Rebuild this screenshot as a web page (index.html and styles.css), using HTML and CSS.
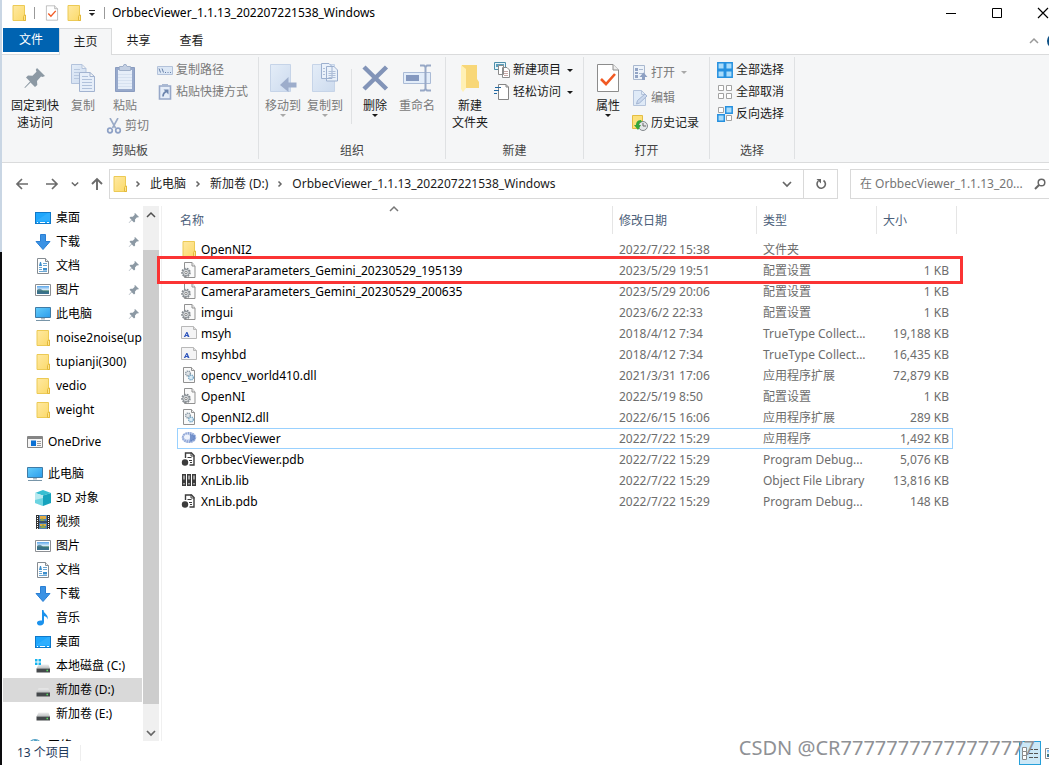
FILE: index.html
```html
<!DOCTYPE html>
<html lang="zh-CN">
<head>
<meta charset="utf-8">
<title>OrbbecViewer_1.1.13_202207221538_Windows</title>
<link rel="stylesheet" href="styles.css">
</head>
<body>
<svg class="sprite" aria-hidden="true">
  <defs>
    <linearGradient id="g-folder" x1="0" y1="0" x2="1" y2="1"><stop offset="0" stop-color="#ffe9a2"/><stop offset="1" stop-color="#fbd968"/></linearGradient>
    <linearGradient id="g-screen" x1="0" y1="0" x2="1" y2="1"><stop offset="0" stop-color="#64cdfb"/><stop offset="1" stop-color="#2b9ceb"/></linearGradient>
    <linearGradient id="g-page" x1="0" y1="0" x2="1" y2="1"><stop offset="0" stop-color="#e4edf8"/><stop offset="1" stop-color="#cddbee"/></linearGradient>
    <linearGradient id="g-sky" x1="0" y1="0" x2="0" y2="1"><stop offset="0" stop-color="#5aa5ea"/><stop offset=".5" stop-color="#e3f1fb"/><stop offset=".6" stop-color="#3d7d6a"/><stop offset="1" stop-color="#3873b5"/></linearGradient>
    <linearGradient id="g-drive" x1="0" y1="0" x2="0" y2="1"><stop offset="0" stop-color="#efefef"/><stop offset="1" stop-color="#b9bcbe"/></linearGradient>
  </defs>
  <symbol id="folder" viewBox="0 0 16 16"><path d="M2 .5h11.500v10h1v5H2z" fill="url(#g-folder)" stroke="#ecca55"/><path d="M12.500 15.500v-4l1-1.500h1v5.500z" fill="#ffe48c" stroke="#e3b93b"/></symbol>
  <symbol id="pin" viewBox="0 0 24 24"><path d="M14 2l8 8-2.500 1-1.500-.5-4 4.500.3 4-2.300 2-4.500-4.500L2 22l-.6-.6 5.600-6L3 11.500l2-2 4.500.2 4-4-.7-2z" fill="#8c99a4"/></symbol>
  <symbol id="chev-r" viewBox="0 0 8 8"><path d="M2.500 1.500L5 4 2.500 6.500" fill="none" stroke="#666" stroke-width="1.500"/></symbol>
  <symbol id="chev-d" viewBox="0 0 10 10"><path d="M1 3l4 4 4-4" fill="none" stroke="#666" stroke-width="1.700"/></symbol>
  <symbol id="chev-u" viewBox="0 0 10 10"><path d="M1 7l4-4 4 4" fill="none" stroke="currentColor" stroke-width="1.500"/></symbol>
  <symbol id="tri" viewBox="0 0 6 3"><path d="M0 0h6L3 3z" fill="currentColor"/></symbol>
  <symbol id="desktop" viewBox="0 0 16 16"><rect x=".5" y="2.500" width="15" height="11" fill="#1ea7fd" stroke="#0f78c9"/><path d="M1 11L13 3h2v8z" fill="#40b5ff" opacity=".5"/><path d="M2 12.500h1M5 12.500h5M12 12.500h2" stroke="#fff"/></symbol>
  <symbol id="download" viewBox="0 0 16 16"><path d="M5.500.5h5v7H15l-7 8-7-8h4.500z" fill="#3b92e4" stroke="#2a7fd4"/></symbol>
  <symbol id="doc" viewBox="0 0 16 16"><path d="M2.500.5h8l3 3v12h-11z" fill="#fff" stroke="#858c92"/><path d="M10.500.5v3h3" fill="#eee" stroke="#858c92"/><path d="M8 5.500h4M8 7.500h4M4 9.500h3M4 11.500h3M4 13.500h8" stroke="#6ba6d3"/><path d="M4 8l1-4h1l1 4M8 10h4v2.500H8z" fill="#3e8fcc"/></symbol>
  <symbol id="pic" viewBox="0 0 16 16"><path d="M.5 2.500h15v11H.5z" fill="#fff" stroke="#8c8f93"/><path d="M2 4h12v8H2z" fill="url(#g-sky)"/><path d="M2 8q3-3 6 1l6 1v2H2z" fill="#3a6f86" opacity=".7"/></symbol>
  <symbol id="pc" viewBox="0 0 16 16"><path d="M.5 1.500h15v10H.5z" fill="url(#g-screen)" stroke="#3f7ba6"/><path d="M6 12h4v1.500H6z" fill="#aebbc4"/><path d="M1 14.500h14" stroke="#7895a8"/></symbol>
  <symbol id="onedrive" viewBox="0 0 16 16"><path d="M.5 2.500h15v11H.5z" fill="#f5f5f5" stroke="#858585"/><path d="M1 4h14" stroke="#858585" stroke-width="2"/><path d="M4 6.500h5V12H4z" fill="#0a70d4"/><path d="M10 7.500h4M10 9.500h4M10 11.500h4" stroke="#999"/></symbol>
  <symbol id="cube" viewBox="0 0 16 16"><path d="M8 0l8 3-8 2.500L0 3z" fill="#36bfd2"/><path d="M0 3l8 2.500V16l-8-3z" fill="#b8e9ef"/><path d="M16 3L8 5.500V16l8-3z" fill="#16a3bd"/><path d="M0 10l8-2v8l-8-3z" fill="#4bcbdc" opacity=".7"/></symbol>
  <symbol id="film" viewBox="0 0 16 16"><path d="M1 1h14v14H1z" fill="#333"/><path d="M4 1h8v14H4z" fill="#4c81b5"/><path d="M5 2h6v3H5zM5 10h6v2H5z" fill="#e2ac43"/><path d="M4 8h8" stroke="#222"/><path d="M7 4l3 3H5zM8 10l3 4H5z" fill="#8ba34c"/><path d="M2.500 2v13M13.500 2v13" stroke="#fff" stroke-dasharray="1 1"/></symbol>
  <symbol id="music" viewBox="0 0 16 16"><path d="M7 0h1.500c0 4 5.500 4 4 9.500-.5-2.500-1.500-3-3.500-3.500V12c0 2-1.500 3.500-4 3.500S2 14 2 12.800 3.500 10 7 10.500z" fill="#1b92ed"/></symbol>
  <symbol id="drive" viewBox="0 0 16 16"><path d="M3.500 6.500h10l1.500 4H1.500z" fill="url(#g-drive)"/><path d="M1.500 10.500H15v4H1.500z" fill="#44484b"/><path d="M11.500 12.500H13" stroke="#55e35e" stroke-width="1.500"/></symbol>
  <symbol id="drive-c" viewBox="0 0 16 16"><use href="#drive"/><path d="M0 1h2.500v2.500H0zM3.500 1H6v2.500H3.500zM0 4.500h2.500V7H0zM3.500 4.500H6V7H3.500z" fill="#16b4ee"/></symbol>
  <symbol id="network" viewBox="0 0 16 16"><circle cx="8" cy="8" r="7" fill="#4f9fc4"/><path d="M3 4l4-2 1 4-3 2zM10 2l3 3-2 2z" fill="#d8edf2"/></symbol>
  <symbol id="cfg" viewBox="0 0 16 16"><path d="M3.500.5h7.500L14 4v11.500H3.500z" fill="#fafafa" stroke="#919191"/><path d="M11 .5V4h3" fill="#eee" stroke="#919191"/><circle cx="5" cy="10.500" r="3.800" fill="#d6dadd" stroke="#858b90" stroke-width="2" stroke-dasharray="1.600 1"/><circle cx="5" cy="10.500" r="3.200" fill="#d9dde0" stroke="#8f959a"/><circle cx="5" cy="10.500" r="1.200" fill="#fff" stroke="#888"/></symbol>
  <symbol id="font" viewBox="0 0 16 16"><path d="M.5 1.500h12l3 3v9H.5z" fill="#f4f4f5" stroke="#b8b8b8"/><path d="M12.500 1.500v3h3" fill="#ddd" stroke="#b8b8b8"/><path d="M2.800 12L5.400 7h1L8.500 12H6.700L6.400 11H4.800L4.300 12zM5 10h1.300L5.800 8.500z" fill="#2e55bd"/></symbol>
  <symbol id="dll" viewBox="0 0 16 16"><path d="M2.500.5h8l3 3v12h-11z" fill="#fafafa" stroke="#919191"/><path d="M10.500.5v3h3" fill="#eee" stroke="#919191"/><circle cx="7" cy="6.500" r="2.400" fill="#dfe4e8" stroke="#8b99a4" stroke-width="1.400" stroke-dasharray="1.200 .6"/><circle cx="10" cy="10.500" r="2.400" fill="#d9ebf6" stroke="#77a6c4" stroke-width="1.400" stroke-dasharray="1.200 .6"/></symbol>
  <symbol id="orb" viewBox="0 0 16 16"><ellipse cx="8" cy="7.500" rx="7.300" ry="5.500" fill="#c3d0ec"/><ellipse cx="8" cy="7.500" rx="5.800" ry="4.200" fill="none" stroke="#8fa6d6" stroke-width="2.600" stroke-dasharray="1.200 1"/><ellipse cx="6" cy="7" rx="3" ry="2.500" fill="#eef3fc"/><path d="M9 4l5 1.500v4L9 12z" fill="#4f73bb" opacity=".65"/></symbol>
  <symbol id="pdb" viewBox="0 0 16 16"><path d="M4.500 7V2h6L13 4.500V14H8.500" fill="none" stroke="#3c3c3c" stroke-width="1.400"/><path d="M10 1.500V5h3.500M6.500 6.500h4M8 9.500h3M9 11.500h2" fill="none" stroke="#3c3c3c"/><circle cx="4" cy="11.500" r="3.200" fill="#3c3c3c"/></symbol>
  <symbol id="lib" viewBox="0 0 16 16"><path d="M1 2h4v12H1zM6 2h4v12H6zM11 2h4v12h-4z" fill="#3c3c3c"/><path d="M2.500 3.500h1v4h-1zM7.500 3.500h1v4h-1zM12.500 3.500h1v4h-1zM2.500 11h1v1.500h-1zM7.500 11h1v1.500h-1zM12.500 11h1v1.500h-1z" fill="#fff"/></symbol>
  <symbol id="prop" viewBox="0 0 24 30"><path d="M1.500 1.500H17L22.500 7v21.500h-21z" fill="#fff" stroke="#8c8c8c"/><path d="M17 1.500V7h5.500" fill="#eee" stroke="#8c8c8c"/><path d="M5 16l5 5 9-10" fill="none" stroke="#f15a24" stroke-width="2.600"/></symbol>
  <symbol id="copy" viewBox="0 0 26 30"><path d="M1.500 1.500H12l4 4v15H1.500zM12 1.500v4h4" fill="url(#g-page)" stroke="#b3c3dc"/><path d="M4 6.500h6M4 9.500h5M4 12.500h5M4 15.500h5" stroke="#b9c9e0"/><path d="M9.500 9.500H20l4.500 4v15h-15zM20 9.500v4h4.500" fill="#e6eef9" stroke="#a2b3d0"/><path d="M12 13.500h6M12 16.500h10M12 19.500h10M12 22.500h10M12 25.500h10" stroke="#b0c1db"/></symbol>
  <symbol id="paste" viewBox="0 0 22 30"><path d="M1.500 4.500h19v24h-19z" fill="#97a9cb" stroke="#8a9cc0"/><path d="M4 7h14v19H4z" fill="#e6eef9"/><path d="M4 11.500h14M4 14.500h14M4 17.500h14M4 20.500h14M4 23.500h14" stroke="#d6e1f0"/><path d="M5.500 7.500v-4H9l1-2h2l1 2h3.500v4z" fill="#c3cfe2" stroke="#a0b0ca"/></symbol>
  <symbol id="cut" viewBox="0 0 16 16"><path d="M4 0l5.500 10M12 0L6.500 10" stroke="#9aaac6" stroke-width="1.600"/><circle cx="4" cy="12.500" r="2.300" fill="none" stroke="#8ea1c6" stroke-width="1.700"/><circle cx="12" cy="12.500" r="2.300" fill="none" stroke="#8ea1c6" stroke-width="1.700"/></symbol>
  <symbol id="path" viewBox="0 0 16 16"><path d="M.5 4.500h15v8H.5z" fill="#dce7f5" stroke="#b3c2da"/><path d="M2 6.500l1.500 4M5 6.500l1.500 4M8 10.500h1M10.500 10.500h1M13 10.500h1" stroke="#667fa8"/></symbol>
  <symbol id="shortcut" viewBox="0 0 16 16"><path d="M2.500 2h11v13h-11z" fill="#e5edf8" stroke="#97a8c9" stroke-width="1.600"/><path d="M5 0h6v3H5z" fill="#a9b8d2"/><path d="M6 12.500c0-3 1-4 3-5" fill="none" stroke="#6d85ad" stroke-width="1.600"/><path d="M6.500 5.500h5v5z" fill="#6d85ad"/></symbol>
  <symbol id="moveto" viewBox="0 0 28 30"><path d="M1.500 1.500h20v27h-20z" fill="url(#g-page)" stroke="#c6d4e8"/><path d="M27.500 19.500h-8V14L11 22l8.500 7v-4.500h8z" fill="#9dadcb"/></symbol>
  <symbol id="copyto" viewBox="0 0 28 30"><path d="M1.500 1.500h22v27h-22z" fill="url(#g-page)" stroke="#c6d4e8"/><path d="M10.500.5H18l3 3v12H10.500zM15.500 3.500H23l3.500 3.500v11h-11z" fill="#eaf1fa" stroke="#9db0cf"/><path d="M17.500 8.500h7M17.500 10.500h7M17.500 12.500h7M17.500 14.500h7M12 5.500h2M12 8.500h2M12 11.500h2" stroke="#b0c0d9"/></symbol>
  <symbol id="del" viewBox="0 0 28 30"><path d="M3 4L25.500 26M25.500 4L3 26" stroke="#8294b8" stroke-width="4.500"/></symbol>
  <symbol id="rename" viewBox="0 0 28 30"><path d="M.5 9.500h27v11H.5z" fill="#e3edf9" stroke="#aabbd6"/><path d="M3 12h13v6H3z" fill="#8498bf"/><path d="M17 2.500h4l1.500 1.500L24 2.500h4M17 27.500h4l1.500-1.500L24 27.500h4M22.500 3v24" fill="none" stroke="#97a8c6" stroke-width="2"/></symbol>
  <symbol id="bigfolder" viewBox="0 0 24 30"><path d="M4 2h15v14l2 3v6H4z" fill="#f8d778"/><path d="M3 2l5 4v19l-3 4-2-3z" fill="#fff0b5"/></symbol>
  <symbol id="newitem" viewBox="0 0 16 16"><path d="M.5.5h11v7H.5z" fill="#e8f4fa" stroke="#4e8faa"/><path d="M2 2h8v3H2z" fill="#5b9fbc"/><path d="M4.500 3.500h5v9h-5zM8.500 5.500H13L15.500 8v7.500h-7z" fill="#fff" stroke="#8b8b8b"/><path d="M10 9.500h4M10 11.500h4M10 13.500h4" stroke="#c7a7a5"/></symbol>
  <symbol id="access" viewBox="0 0 16 16"><path d="M4.500.5H12L14.500 3v12.500h-10z" fill="#fff" stroke="#858585"/><path d="M12 .5V3h2.500" fill="none" stroke="#858585"/><path d="M1 3.500h6M0 6.500h5M0 9.500h3" stroke="#2269a2" stroke-width="1.200"/></symbol>
  <symbol id="open" viewBox="0 0 16 16"><path d="M1.500.5h11v14h-11z" fill="#edf3fa" stroke="#a9b8cf"/><path d="M3 3h3v3H3zM3 7h3v2H3zM3 10h3v3H3z" fill="#92a4c5"/><path d="M7 4.500h4M7 8.500h4" stroke="#a9b8cf"/><path d="M10 15v-3H7.500l4-4.500 4 4.500H13v3z" fill="#8da0c3"/></symbol>
  <symbol id="edit" viewBox="0 0 16 16"><path d="M1.500.5h8l4 4v11h-12z" fill="#dfeaf7" stroke="#b5c4db"/><path d="M9.500.5v4h4" fill="none" stroke="#b5c4db"/><path d="M5.500 10.500L13 4l2 2-7.500 7-3 1z" fill="#cbd9ee" stroke="#a2b4d2"/></symbol>
  <symbol id="history" viewBox="0 0 16 16"><path d="M.5.5h10v13H.5z" fill="#fce17b" stroke="#e4bd43"/><circle cx="11" cy="11" r="4.500" fill="#e3e6e8" stroke="#81878b"/><path d="M11 8v3h3" fill="none" stroke="#666"/><path d="M9 5c-4 0-5 3-5 5H2l4 5 3-5H7c0-2 1-3 3-3z" fill="#35a53b"/></symbol>
  <symbol id="selall" viewBox="0 0 16 16"><path d="M.8.8h6.500v6.500H.8zM8.700.8h6.500v6.500H8.700zM.8 8.700h6.500v6.500H.8zM8.700 8.700h6.500v6.500H8.700z" fill="#a9dcfb" stroke="#2590df" stroke-width="1.500"/></symbol>
  <symbol id="selnone" viewBox="0 0 16 16"><path d="M1.500 1.500h5v5h-5zM9.500 1.500h5v5h-5zM1.500 9.500h5v5h-5zM9.500 9.500h5v5h-5z" fill="#fff" stroke="#a2a2a2"/></symbol>
  <symbol id="selinv" viewBox="0 0 16 16"><path d="M1.500 1.500h5v5h-5zM9.500 9.500h5v5h-5z" fill="#fff" stroke="#a2a2a2"/><path d="M8.700.8h6.500v6.500H8.700zM.8 8.700h6.500v6.500H.8z" fill="#a9dcfb" stroke="#2590df" stroke-width="1.500"/></symbol>
</svg>

<div class="window">
  <header class="titlebar">
    <svg class="i16"><use href="#folder"/></svg>
    <span class="bar"></span>
    <button class="qa" aria-label="属性"><svg class="i16"><use href="#prop"/></svg></button>
    <button class="qa" aria-label="新建文件夹"><svg class="i16"><use href="#folder"/></svg></button>
    <button class="qa" aria-label="自定义快速访问工具栏"><svg class="qmenu" viewBox="0 0 8 8"><path d="M1 1.500h6" stroke="#222"/><path d="M1 4h6L4 7z" fill="#222"/></svg></button>
    <span class="bar"></span>
    <h1 class="title">OrbbecViewer_1.1.13_202207221538_Windows</h1>
    <div class="controls">
      <button aria-label="最小化"><svg class="ctl" viewBox="0 0 12 12"><path d="M1 6.500h10" stroke="#000"/></svg></button>
      <button aria-label="最大化"><svg class="ctl" viewBox="0 0 12 12"><path d="M1.500 1.500h9v9h-9z" fill="none" stroke="#000"/></svg></button>
      <button aria-label="关闭"><svg class="ctl" viewBox="0 0 12 12"><path d="M1 1l10 10M11 1L1 11" stroke="#000" stroke-width="1.200"/></svg></button>
    </div>
  </header>

  <nav class="tabs">
    <button class="tab file">文件</button>
    <button class="tab active">主页</button>
    <button class="tab">共享</button>
    <button class="tab">查看</button>
    <div class="tabs-end">
      <button class="collapse" aria-label="折叠功能区"><svg class="i10"><use href="#chev-u"/></svg></button>
      <button class="help" aria-label="帮助"></button>
    </div>
  </nav>

  <section class="ribbon">
    <div class="group g-clip">
      <div class="tools">
        <button class="big wide"><svg class="pic pinbig"><use href="#pin"/></svg><span>固定到快<br>速访问</span></button>
        <button class="big off"><svg class="pic"><use href="#copy"/></svg><span>复制</span></button>
        <div class="stack paste">
          <button class="big off"><svg class="pic"><use href="#paste"/></svg><span>粘贴</span></button>
          <button class="small off cutrow"><svg class="i16"><use href="#cut"/></svg>剪切</button>
        </div>
        <div class="stack">
          <button class="small off"><svg class="i16"><use href="#path"/></svg>复制路径</button>
          <button class="small off"><svg class="i16"><use href="#shortcut"/></svg>粘贴快捷方式</button>
        </div>
      </div>
      <div class="caption">剪贴板</div>
    </div>
    <div class="group g-org">
      <div class="tools">
        <button class="big off"><svg class="pic"><use href="#moveto"/></svg><span>移动到</span><svg class="tri"><use href="#tri"/></svg></button>
        <button class="big off"><svg class="pic"><use href="#copyto"/></svg><span>复制到</span><svg class="tri"><use href="#tri"/></svg></button>
        <span class="rule"></span>
        <button class="big"><svg class="pic"><use href="#del"/></svg><span>删除</span><svg class="tri"><use href="#tri"/></svg></button>
        <button class="big off"><svg class="pic"><use href="#rename"/></svg><span>重命名</span></button>
      </div>
      <div class="caption">组织</div>
    </div>
    <div class="group g-new">
      <div class="tools">
        <button class="big"><svg class="pic"><use href="#bigfolder"/></svg><span>新建<br>文件夹</span></button>
        <div class="stack">
          <button class="small"><svg class="i16"><use href="#newitem"/></svg>新建项目<svg class="tri"><use href="#tri"/></svg></button>
          <button class="small"><svg class="i16"><use href="#access"/></svg>轻松访问<svg class="tri"><use href="#tri"/></svg></button>
        </div>
      </div>
      <div class="caption">新建</div>
    </div>
    <div class="group g-open">
      <div class="tools">
        <button class="big"><svg class="pic"><use href="#prop"/></svg><span>属性</span><svg class="tri"><use href="#tri"/></svg></button>
        <div class="stack roomy">
          <button class="small off"><svg class="i16"><use href="#open"/></svg>打开<svg class="tri"><use href="#tri"/></svg></button>
          <button class="small off"><svg class="i16"><use href="#edit"/></svg>编辑</button>
          <button class="small"><svg class="i16"><use href="#history"/></svg>历史记录</button>
        </div>
      </div>
      <div class="caption">打开</div>
    </div>
    <div class="group g-sel">
      <div class="tools">
        <div class="stack">
          <button class="small"><svg class="i16"><use href="#selall"/></svg>全部选择</button>
          <button class="small"><svg class="i16"><use href="#selnone"/></svg>全部取消</button>
          <button class="small"><svg class="i16"><use href="#selinv"/></svg>反向选择</button>
        </div>
      </div>
      <div class="caption">选择</div>
    </div>
  </section>

  <div class="address-row">
    <div class="history-nav">
      <button aria-label="后退"><svg class="arrow" viewBox="0 0 14 14"><path d="M13 7H2M7 2L2 7l5 5" fill="none" stroke="#6b6b6b" stroke-width="1.700"/></svg></button>
      <button aria-label="前进"><svg class="arrow" viewBox="0 0 14 14"><path d="M1 7h11M7 2l5 5-5 5" fill="none" stroke="#6b6b6b" stroke-width="1.700"/></svg></button>
      <button class="recent" aria-label="最近位置"><svg class="i8"><use href="#chev-d"/></svg></button>
      <button class="up" aria-label="上移"><svg class="arrow" viewBox="0 0 14 14"><path d="M7 13V2M2 7l5-5 5 5" fill="none" stroke="#6b6b6b" stroke-width="1.900"/></svg></button>
    </div>
    <div class="address">
      <svg class="i16"><use href="#folder"/></svg>
      <svg class="i8"><use href="#chev-r"/></svg>
      <a href="#">此电脑</a>
      <svg class="i8"><use href="#chev-r"/></svg>
      <a href="#">新加卷 (D:)</a>
      <svg class="i8"><use href="#chev-r"/></svg>
      <a href="#">OrbbecViewer_1.1.13_202207221538_Windows</a>
      <button class="drop" aria-label="以前的位置"><svg class="i10"><use href="#chev-d"/></svg></button>
      <button class="refresh" aria-label="刷新"><svg class="i12" viewBox="0 0 12 12"><path d="M8.500 2.500A4.200 4.200 0 1 1 3.300 3" fill="none" stroke="#666" stroke-width="1.600"/><path d="M1.500 1h4.500v4.500z" fill="#666"/></svg></button>
    </div>
    <div class="search">
      <input type="text" aria-label="搜索" placeholder="在 OrbbecViewer_1.1.13_20...">
      <svg class="i12" viewBox="0 0 12 12"><circle cx="7.500" cy="4.500" r="3.300" fill="none" stroke="#666" stroke-width="1.500"/><path d="M5 7L1 11" stroke="#666" stroke-width="2"/></svg>
    </div>
  </div>

  <main class="content">
    <aside class="side">
      <div class="tree">
        <ul>
          <li><svg class="i16"><use href="#desktop"/></svg><span>桌面</span><svg class="pin"><use href="#pin"/></svg></li>
          <li><svg class="i16"><use href="#download"/></svg><span>下载</span><svg class="pin"><use href="#pin"/></svg></li>
          <li><svg class="i16"><use href="#doc"/></svg><span>文档</span><svg class="pin"><use href="#pin"/></svg></li>
          <li><svg class="i16"><use href="#pic"/></svg><span>图片</span><svg class="pin"><use href="#pin"/></svg></li>
          <li><svg class="i16"><use href="#pc"/></svg><span>此电脑</span><svg class="pin"><use href="#pin"/></svg></li>
          <li><svg class="i16"><use href="#folder"/></svg><span>noise2noise(up</span></li>
          <li><svg class="i16"><use href="#folder"/></svg><span>tupianji(300)</span></li>
          <li><svg class="i16"><use href="#folder"/></svg><span>vedio</span></li>
          <li><svg class="i16"><use href="#folder"/></svg><span>weight</span></li>
          <li class="root"><svg class="i16"><use href="#onedrive"/></svg><span>OneDrive</span></li>
          <li class="root"><svg class="i16"><use href="#pc"/></svg><span>此电脑</span></li>
          <li><svg class="i16"><use href="#cube"/></svg><span>3D 对象</span></li>
          <li><svg class="i16"><use href="#film"/></svg><span>视频</span></li>
          <li><svg class="i16"><use href="#pic"/></svg><span>图片</span></li>
          <li><svg class="i16"><use href="#doc"/></svg><span>文档</span></li>
          <li><svg class="i16"><use href="#download"/></svg><span>下载</span></li>
          <li><svg class="i16"><use href="#music"/></svg><span>音乐</span></li>
          <li><svg class="i16"><use href="#desktop"/></svg><span>桌面</span></li>
          <li><svg class="i16"><use href="#drive-c"/></svg><span>本地磁盘 (C:)</span></li>
          <li class="current"><svg class="i16"><use href="#drive"/></svg><span>新加卷 (D:)</span></li>
          <li><svg class="i16"><use href="#drive"/></svg><span>新加卷 (E:)</span></li>
          <li class="root"><svg class="i16"><use href="#network"/></svg><span>网络</span></li>
        </ul>
      </div>
      <div class="scrollbar">
        <button aria-label="向上滚动"><svg class="i10"><use href="#chev-u"/></svg></button>
        <div class="thumb"></div>
        <button aria-label="向下滚动"><svg class="i10"><use href="#chev-d"/></svg></button>
      </div>
    </aside>

    <section class="files">
      <table>
        <colgroup><col class="c-name"><col class="c-date"><col class="c-type"><col class="c-size"></colgroup>
        <thead><tr><th>名称<svg class="sort"><use href="#chev-u"/></svg></th><th>修改日期</th><th>类型</th><th>大小</th></tr></thead>
        <tbody>
          <tr><td><svg class="i16"><use href="#folder"/></svg>OpenNI2</td><td>2022/7/22 15:38</td><td>文件夹</td><td></td></tr>
          <tr class="marked"><td><svg class="i16"><use href="#cfg"/></svg>CameraParameters_Gemini_20230529_195139</td><td>2023/5/29 19:51</td><td>配置设置</td><td>1 KB</td></tr>
          <tr><td><svg class="i16"><use href="#cfg"/></svg>CameraParameters_Gemini_20230529_200635</td><td>2023/5/29 20:06</td><td>配置设置</td><td>1 KB</td></tr>
          <tr><td><svg class="i16"><use href="#cfg"/></svg>imgui</td><td>2023/6/2 22:33</td><td>配置设置</td><td>1 KB</td></tr>
          <tr><td><svg class="i16"><use href="#font"/></svg>msyh</td><td>2018/4/12 7:34</td><td>TrueType Collect...</td><td>19,188 KB</td></tr>
          <tr><td><svg class="i16"><use href="#font"/></svg>msyhbd</td><td>2018/4/12 7:34</td><td>TrueType Collect...</td><td>16,435 KB</td></tr>
          <tr><td><svg class="i16"><use href="#dll"/></svg>opencv_world410.dll</td><td>2021/3/31 17:06</td><td>应用程序扩展</td><td>72,879 KB</td></tr>
          <tr><td><svg class="i16"><use href="#cfg"/></svg>OpenNI</td><td>2022/5/19 8:50</td><td>配置设置</td><td>1 KB</td></tr>
          <tr><td><svg class="i16"><use href="#dll"/></svg>OpenNI2.dll</td><td>2022/6/15 16:06</td><td>应用程序扩展</td><td>289 KB</td></tr>
          <tr class="focused"><td><svg class="i16"><use href="#orb"/></svg>OrbbecViewer</td><td>2022/7/22 15:29</td><td>应用程序</td><td>1,492 KB</td></tr>
          <tr><td><svg class="i16"><use href="#pdb"/></svg>OrbbecViewer.pdb</td><td>2022/7/22 15:29</td><td>Program Debug...</td><td>5,076 KB</td></tr>
          <tr><td><svg class="i16"><use href="#lib"/></svg>XnLib.lib</td><td>2022/7/22 15:29</td><td>Object File Library</td><td>13,816 KB</td></tr>
          <tr><td><svg class="i16"><use href="#pdb"/></svg>XnLib.pdb</td><td>2022/7/22 15:29</td><td>Program Debug...</td><td>148 KB</td></tr>
        </tbody>
      </table>
    </section>
  </main>

  <footer class="status">
    <span class="count">13 个项目</span>
    <div class="views">
      <button class="view on" aria-label="详细信息"><svg viewBox="0 0 18 16"><path d="M1.500 2.500h4v4h-4zM1.500 6.500h4v4h-4zM1.500 10.500h4v4h-4z" fill="#fff" stroke="#8a8a8a"/><path d="M8 4.500h4M13 4.500h4M8 8.500h4M13 8.500h4M8 12.500h4M13 12.500h4" stroke="#555"/></svg></button>
      <button class="view" aria-label="大图标"><svg viewBox="0 0 18 16"><path d="M1.500 3.500h14v10h-14z" fill="#fff" stroke="#8a8a8a"/><path d="M3 5h11v7H3z" fill="url(#g-sky)"/></svg></button>
    </div>
  </footer>
  <div class="watermark">CSDN @CR77777777777777777</div>
</div>
</body>
</html>
```
FILE: styles.css
```css
* { box-sizing: border-box; }

body {
  margin: 0;
  height: 100vh;
  overflow: hidden;
  padding-left: 2px;
  background: linear-gradient(#c9d6e4 0 252px, #0c0c0e 252px);
  color: #1a1a1a;
  font: 12px/16px "Noto Sans", "Noto Sans CJK SC", sans-serif;
}

button {
  margin: 0;
  padding: 0;
  border: 0;
  background: none;
  color: inherit;
  font: inherit;
}

a { color: inherit; text-decoration: none; }
svg { display: block; flex: none; }
.sprite { position: absolute; width: 0; height: 0; }
.i8 { width: 8px; height: 8px; }
.i10 { width: 10px; height: 10px; }
.i12 { width: 12px; height: 12px; }
.i16 { width: 16px; height: 16px; }

.window {
  position: relative;
  display: flex;
  flex-direction: column;
  height: 100%;
  overflow: hidden;
  background: #fff;
}

/* Title bar */
.titlebar {
  display: flex;
  align-items: center;
  height: 28px;
  padding: 0 0 2px 9px;
  color: #000;
}
.bar { width: 1px; height: 12px; margin: 0 7px; background: #999; }
.titlebar .i16 + .bar { margin-right: 9px; }
.qa { margin-right: 6px; }
.qa + .bar { margin-left: 2px; }
.qmenu { width: 8px; height: 8px; }
.title { margin: 0; font-size: 12px; font-weight: 400; }
.controls { display: flex; margin-left: auto; margin-right: -17px; }
.controls button { display: grid; place-items: center; width: 46px; height: 24px; }
.ctl { width: 12px; height: 12px; }

/* Ribbon tabs */
.tabs {
  display: flex;
  height: 27px;
  padding-left: 1px;
  border-bottom: 1px solid #dadbdc;
}
.tab { width: 53px; height: 26px; }
.tab.file { width: 56px; height: 24px; background: #0063b1; color: #fff; }
.tab.active {
  width: 53px;
  height: 27px;
  border: 1px solid #dadbdc;
  border-bottom: 0;
  background: #f5f6f7;
}
.tabs-end { display: flex; align-items: center; gap: 8px; margin-left: auto; margin-right: -14px; color: #999; }
.help { width: 16px; height: 16px; border-radius: 8px; background: #0b4f85; }

/* Ribbon */
.ribbon {
  display: flex;
  height: 108px;
  padding: 2px 0 3px;
  border-bottom: 1px solid #dadbdc;
  background: #f5f6f7;
}
.group { display: flex; flex-direction: column; border-right: 1px solid #dfe1e3; }
.tools { display: flex; flex: 1; align-items: flex-start; }
.caption { height: 16px; text-align: center; color: #444; }
.g-clip { width: 257px; }
.g-org { width: 187px; }
.g-new { width: 138px; }
.g-open { width: 126px; }
.g-sel { width: 85px; }
.g-clip .tools { padding-left: 6px; }
.g-org .tools { padding-left: 3px; }
.g-new .tools, .g-open .tools { padding-left: 2px; gap: 2px; }
.g-sel .tools { padding-left: 7px; }
.big {
  display: flex;
  flex-direction: column;
  align-items: center;
  width: 42px;
  padding-top: 6px;
  line-height: 17px;
}
.big.wide { width: 54px; }
.big .pic { width: 28px; height: 30px; margin-bottom: 4px; }
.big .pinbig { width: 24px; }
.off { color: #7a7a7a; }
.off .tri { color: #a8a8a8; }
.tri { width: 6px; height: 3px; }
.stack { display: flex; flex-direction: column; padding-top: 2px; }
.stack .small {
  display: flex;
  align-items: center;
  gap: 3px;
  height: 22px;
  white-space: nowrap;
}
.small .tri { margin-left: 3px; }
.stack.paste { width: 53px; padding-top: 0; }
.paste .small { height: 24px; padding-left: 2px; }
.g-new .big, .g-open .big { width: 44px; }
.stack.roomy { padding-top: 3px; }
.roomy .small { height: 25px; }
.rule { width: 1px; height: 55px; margin: 12px 2px 0 5px; background: #dfe1e3; }

/* Address bar */
.address-row { display: flex; height: 36px; padding-top: 6px; }
.history-nav { display: flex; align-items: center; width: 107px; padding-left: 13px; gap: 16px; }
.arrow { width: 14px; height: 14px; }
.history-nav .recent { margin-left: -4px; }
.history-nav .up { margin-left: -5px; }
.address {
  display: flex;
  flex: 1;
  align-items: center;
  gap: 8px;
  height: 30px;
  min-width: 0;
  padding-left: 2px;
  border: 1px solid #d9d9d9;
  white-space: nowrap;
}
.address .i16 { margin-right: -2px; }
.drop { margin-left: auto; }
.refresh {
  display: grid;
  place-items: center;
  width: 34px;
  height: 28px;
  margin-left: 3px;
  border-left: 1px solid #d9d9d9;
}
.search {
  display: flex;
  align-items: center;
  flex: 0 0 196px;
  height: 30px;
  margin-left: 12px;
  margin-right: -2px;
  padding: 0 4px 0 9px;
  border: 1px solid #d9d9d9;
}
.search input {
  flex: 1;
  min-width: 0;
  padding: 0;
  border: 0;
  outline: 0;
  background: none;
  font: inherit;
}
.search input::placeholder { color: #757575; opacity: 1; }

/* Content */
.content { display: flex; flex: 1; min-height: 0; padding-top: 7px; }
.side { display: flex; flex: 0 0 157px; }
.tree { flex: 1; min-width: 0; overflow: hidden; padding: 0 1px; }
.tree ul { margin: 0; padding: 0; list-style: none; color: #000; }
.tree li {
  display: flex;
  align-items: center;
  gap: 5px;
  height: 24px;
  padding-left: 32px;
  white-space: nowrap;
}
.tree .root { margin-top: 8px; padding-left: 24px; }
.tree .current { background: #d9d9d9; }
.tree .pin { width: 12px; height: 12px; margin: 0 2px 0 auto; }
.scrollbar { display: flex; flex-direction: column; width: 16px; background: #f0f0f0; color: #505050; }
.scrollbar button { display: grid; place-items: center; height: 17px; }
.thumb { flex: 1; margin: 27px 0 20px; background: #cdcdcd; }

.files { flex: 1; min-width: 0; margin-left: 2px; padding-left: 15px; border-left: 1px solid #f0f0f0; }
table { width: 780px; border-collapse: collapse; table-layout: fixed; }
.c-name { width: 436px; }
.c-date { width: 144px; }
.c-type { width: 120px; }
.c-size { width: 80px; }
th {
  position: relative;
  height: 33px;
  padding: 0 0 4px 6px;
  background: linear-gradient(#e5e5e5, #e5e5e5) right 0 top 0 / 1px 28px no-repeat;
  color: #4c607a;
  font-weight: 400;
  text-align: left;
}
th:first-child { padding-left: 3px; }
.sort { position: absolute; top: -2px; right: 214px; width: 10px; height: 10px; color: #777; }
td { height: 21px; padding: 0 0 0 6px; color: #6d6d6d; white-space: nowrap; }
td:first-child { padding-left: 4px; color: #000; }
td:last-child { padding: 0 8px 0 0; text-align: right; }
td .i16 { display: inline-block; margin-right: 4px; vertical-align: -3px; }
tr.focused, tr.marked { position: relative; }
tr.focused::after {
  content: "";
  position: absolute;
  inset: 0 4px 0 0;
  border: 1px solid #99d1ff;
}
tr.marked::after {
  content: "";
  position: absolute;
  z-index: 2;
  inset: -4px -6px -3px -20px;
  border: 3px solid #fb3434;
}

/* Status bar */
.status { display: flex; align-items: center; height: 24px; padding-left: 15px; color: #1e395b; }
.count { padding-right: 10px; border-right: 1px solid #eee; }
.views { display: flex; margin-left: auto; margin-right: -16px; }
.view { display: grid; place-items: center; width: 24px; height: 24px; }
.view.on { width: 22px; border: 1px solid #26a0da; background: #cce8f7; }
.view svg { width: 18px; height: 16px; }

.watermark {
  position: absolute;
  right: 14px;
  bottom: 4px;
  color: #8f9195;
  font: 20px/26px "Noto Sans", sans-serif;
  pointer-events: none;
}
```
